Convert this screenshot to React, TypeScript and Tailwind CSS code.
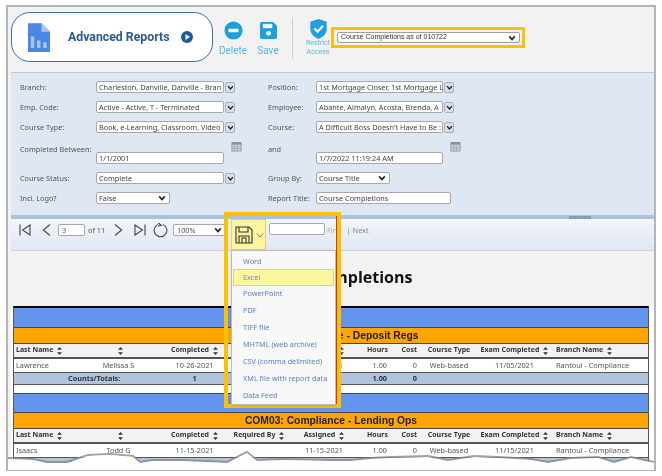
import type { ReactNode } from 'react';

const COLS = 'grid grid-cols-[71px_67px_85px_44px_86px_28px_29px_50px_81px_1fr]';

function Chevron({ className = 'w-2 h-2' }: { className?: string }) {
  return (
    <svg viewBox="0 0 10 10" className={`${className} shrink-0`} fill="none" stroke="#222" strokeWidth="2">
      <path d="M1.5 3 L5 7 L8.5 3" />
    </svg>
  );
}

function Field({ text, w, arrow, drop }: { text: string; w: string; arrow?: boolean; drop?: boolean }) {
  return (
    <div className="flex items-center gap-px">
      <div className={`${w} h-[12px] bg-white border border-[#a8a8a8] rounded-[2px] flex items-center justify-between pl-[2px] pr-[3px]`}>
        <span className="whitespace-nowrap text-[#444] text-[7.3px] leading-[10px]">{text}</span>
        {drop && <Chevron />}
      </div>
      {arrow && (
        <div className="w-[10px] h-[11px] bg-[#d9dfe8] border border-[#a8b0bc] rounded-[2px] flex items-center justify-center">
          <Chevron className="w-[7px] h-[7px]" />
        </div>
      )}
    </div>
  );
}

function Calendar() {
  return (
    <svg viewBox="0 0 12 12" className="w-[11px] h-[11px]">
      <rect x="0.5" y="1" width="11" height="10.5" rx="1" fill="#8b939c" />
      <rect x="1.5" y="4" width="9" height="6.5" fill="#d5dbe2" />
      <path d="M4 4v7M7 4v7M1.5 6.5h9M1.5 8.5h9" stroke="#8b939c" strokeWidth="0.6" />
    </svg>
  );
}

function FormRow({ className, l1, f1, l2, f2 }: { className: string; l1: string; f1: ReactNode; l2: string; f2: ReactNode }) {
  return (
    <div className={`grid grid-cols-[76px_172px_48px_1fr] items-center text-[7.3px] text-[#555] ${className}`}>
      <span className="whitespace-nowrap">{l1}</span>
      {f1}
      <span className="whitespace-nowrap">{l2}</span>
      {f2}
    </div>
  );
}

function Sort() {
  return (
    <svg viewBox="0 0 6 10" className="w-[5px] h-[8px] shrink-0 inline-block ml-[4px]" fill="#333">
      <path d="M3 0 L6 3.5 H0 Z M3 10 L0 6.5 H6 Z" />
    </svg>
  );
}

function HeadRow() {
  const cell = 'flex items-center justify-center whitespace-nowrap';
  return (
    <div className={`${COLS} h-[15px] bg-[#f2f2f2] border-b-2 border-[#555] text-[7px] font-bold text-[#333] items-center`}>
      <span className="pl-[2px] flex items-center">Last Name<Sort /></span>
      <span className={cell}><Sort /></span>
      <span className={cell}>Completed<Sort /></span>
      <span className={cell}>Required By<Sort /></span>
      <span className={cell}>Assigned<Sort /></span>
      <span className="text-right pr-[8px]">Hours</span>
      <span className="text-right pr-[7px]">Cost</span>
      <span className={cell}>Course Type</span>
      <span className={cell}>Exam Completed<Sort /></span>
      <span className="pl-[1px] flex items-center whitespace-nowrap">Branch Name<Sort /></span>
    </div>
  );
}

function DataRow({ first, last, date, assigned, exam }: { first: string; last: string; date: string; assigned: string; exam: string }) {
  return (
    <div className={`${COLS} h-[11px] mt-[1px] bg-white text-[7.3px] text-[#555] items-center whitespace-nowrap`}>
      <span className="pl-[2px]">{last}</span>
      <span className="text-center">{first}</span>
      <span className="text-center">{date}</span>
      <span />
      <span className="text-center">{assigned}</span>
      <span className="text-right pr-[8px]">1.00</span>
      <span className="text-right pr-[7px]">0</span>
      <span className="text-center">Web-based</span>
      <span className="text-center">{exam}</span>
      <span className="pl-[1px]">Rantoul - Compliance</span>
    </div>
  );
}

function TotalsRow() {
  return (
    <div className={`${COLS} h-[13px] mt-px bg-[#b0c4de] border-y border-[#555] text-[7.3px] font-bold text-[#333] items-center`}>
      <span className="col-span-2 pl-[54px] whitespace-nowrap">Counts/Totals:</span>
      <span className="text-center">1</span>
      <span />
      <span />
      <span className="text-right pr-[8px]">1.00</span>
      <span className="text-right pr-[7px]">0</span>
    </div>
  );
}

function Band({ title, h }: { title: string; h: string }) {
  return (
    <>
      <div className={`${h} bg-[#6495ed] border-b border-[#444]`} />
      <div className="h-[16px] bg-[#ffa500] border-b border-[#444] flex items-center justify-center font-['Liberation_Sans',sans-serif] font-bold text-[10.3px] text-[#222]">
        {title}
      </div>
    </>
  );
}

function TornEdge() {
  const edge =
    'M8 458 L33 459 L47 462 L67 462 L88 455 L110 454 L133 456 L140 462 L153 460 L183 460 L227 462 L247 452 L257 460 L283 459 L331 460 L351 460 L371 458 L391 457 L428 456 L448 460 L474 456 L498 457 L531 459 L548 462 L571 458 L598 457 L614 462 L631 457 L654 462';
  return (
    <svg viewBox="0 0 662 476" className="absolute inset-0 w-[662px] h-[476px] pointer-events-none">
      <path d={edge} fill="none" stroke="#8a8a8a" strokeWidth="2" opacity="0.8" />
      <path d={`${edge} L654 469 L8 469 Z`} fill="#fff" transform="translate(0 1)" />
    </svg>
  );
}

export default function App() {
  return (
    <div className="relative w-[662px] h-[476px] overflow-hidden bg-white font-['Noto_Sans',sans-serif] blur-[0.3px]">
      <div className="ml-[6px] mt-[5px] w-[650px] h-[466px] border-2 border-[#b5b5b5] bg-[#f2f2f2] overflow-hidden">
        {/* top bar */}
        <div className="h-[65px] flex items-start pl-[3px] pt-[5px]">
          <div className="w-[202px] h-[50px] bg-white border-[1.5px] border-[#3d6fa8] rounded-[19px] flex items-center pl-[15px]">
            <svg viewBox="0 0 24 30" className="w-[23px] h-[29px]">
              <path d="M1 0 H15 L24 9 V30 H1 Z" fill="#4a86e8" />
              <path d="M15 0 L24 9 H15 Z" fill="#a9c5f3" />
              <path d="M4 14h3.5v12H4zM10.5 18H14v8h-3.5zM17 20h3.5v6H17z" fill="#a9c5f3" />
            </svg>
            <span className="ml-[18px] font-['Roboto',sans-serif] font-bold text-[12.3px] text-[#2a5a8f] whitespace-nowrap">Advanced Reports</span>
            <svg viewBox="0 0 12 12" className="w-[12px] h-[12px] ml-[12px]">
              <circle cx="6" cy="6" r="6" fill="#1f5a9a" />
              <path d="M4.5 3 L9 6 L4.5 9 Z" fill="#fff" />
            </svg>
          </div>
          <div className="ml-[4px] w-[32px] flex flex-col items-center pt-[9px] font-['Roboto',sans-serif] text-[10px] text-[#5bb5e5]">
            <svg viewBox="0 0 20 20" className="w-[19px] h-[19px]">
              <circle cx="10" cy="10" r="9.5" fill="#1ea0dc" />
              <rect x="4.5" y="8.2" width="11" height="3.6" rx="1.5" fill="#fff" />
            </svg>
            <span className="mt-[3px]">Delete</span>
          </div>
          <div className="ml-[4px] w-[30px] flex flex-col items-center pt-[9px] font-['Roboto',sans-serif] text-[10px] text-[#5bb5e5]">
            <svg viewBox="0 0 18 18" className="w-[17px] h-[19px]">
              <path d="M2 0 H14 L18 4 V16 a2 2 0 0 1 -2 2 H2 a2 2 0 0 1 -2 -2 V2 a2 2 0 0 1 2 -2 Z" fill="#1ea0dc" />
              <rect x="3" y="2" width="10" height="4.5" fill="#fff" />
              <circle cx="9" cy="12" r="2.6" fill="#fff" />
            </svg>
            <span className="mt-[3px]">Save</span>
          </div>
          <div className="ml-[9px] mt-[5px] w-px h-[42px] bg-[#cfcfcf]" />
          <div className="ml-[9px] w-[32px] flex flex-col items-center pt-[7px] font-['Roboto',sans-serif] text-[7px] leading-[9px] text-[#5bb5e5] text-center">
            <svg viewBox="0 0 20 22" className="w-[19px] h-[20px]">
              <path d="M10 0 L19 3 V11 C19 16 15 20 10 22 C5 20 1 16 1 11 V3 Z" fill="#1ea0dc" />
              <path d="M5.5 10.5 L9 14 L15 7.5" fill="none" stroke="#fff" strokeWidth="2.4" />
            </svg>
            <span>Restrict</span>
            <span>Access</span>
          </div>
          <div className="-ml-[3px] mt-[15px] w-[194px] h-[21px] border-[3px] border-[#ffc000] bg-[#f2f2f2] flex items-center pl-[3px] pr-[2px]">
            <div className="flex-1 h-[11px] bg-white border border-[#a0a0a0] rounded-[2px] flex items-center justify-between pl-[3px] pr-[3px] font-['Liberation_Sans',sans-serif] text-[7px] text-[#333]">
              <span className="whitespace-nowrap">Course Completions as of 010722</span>
              <Chevron />
            </div>
          </div>
        </div>

        {/* filter panel */}
        <div className="ml-[3px] h-[143px] bg-[#dfe7f3] border-t border-[#b8cbe3] pl-[9px] pt-[8px]">
          <FormRow className="h-[12px]" l1="Branch:" f1={<Field text="Charleston, Danville, Danville - Bran" w="w-[128px]" arrow />} l2="Position:" f2={<Field text="1st Mortgage Closer, 1st Mortgage L" w="w-[127px]" arrow />} />
          <FormRow className="h-[12px] mt-[8px]" l1="Emp. Code:" f1={<Field text="Active - Active, T - Terminated" w="w-[128px]" arrow />} l2="Employee:" f2={<Field text="Abante, Almalyn, Acosta, Brenda, A" w="w-[127px]" arrow />} />
          <FormRow className="h-[12px] mt-[8px]" l1="Course Type:" f1={<Field text="Book, e-Learning, Classroom, Video" w="w-[128px]" arrow />} l2="Course:" f2={<Field text="A Difficult Boss Doesn't Have to Be :" w="w-[127px]" arrow />} />
          <div className="h-[32px] mt-[3px] grid grid-cols-[76px_172px_48px_1fr] text-[7.3px] text-[#555]">
            <span className="whitespace-nowrap mt-[8px] leading-[10px]">Completed Between:</span>
            <div className="flex items-start gap-[7px] pt-[5px]">
              <div className="mt-[11px]"><Field text="1/1/2001" w="w-[128px]" /></div>
              <Calendar />
            </div>
            <span className="mt-[8px] leading-[10px]">and</span>
            <div className="flex items-start gap-[7px] pt-[5px]">
              <div className="mt-[11px]"><Field text="1/7/2022 11:19:24 AM" w="w-[127px]" /></div>
              <Calendar />
            </div>
          </div>
          <FormRow className="h-[12px] mt-[4px]" l1="Course Status:" f1={<Field text="Complete" w="w-[128px]" arrow />} l2="Group By:" f2={<Field text="Course Title" w="w-[74px]" drop />} />
          <FormRow className="h-[12px] mt-[8px]" l1="Incl. Logo?" f1={<Field text="False" w="w-[74px]" drop />} l2="Report Title:" f2={<Field text="Course Completions" w="w-[135px]" />} />
        </div>

        {/* splitter */}
        <div className="ml-[3px] h-[4px] bg-[#a9c0de] flex justify-end pr-[63px]">
          <div className="w-[22px] h-[3px] mt-px bg-[#8a9db8]" />
        </div>

        {/* viewer toolbar */}
        <div className="ml-[3px] h-[32px] bg-gradient-to-b from-[#f3f6fa] to-[#dfe7f3] border-b border-[#cdd6e2] flex items-start pl-[8px] pt-[5px] text-[7.3px] text-[#555]">
          <svg viewBox="0 0 12 12" className="w-[12px] h-[12px]" fill="none" stroke="#444" strokeWidth="1.1">
            <path d="M1 0.5 V11.5 M11 1 L3.5 6 L11 11 Z" />
          </svg>
          <svg viewBox="0 0 8 12" className="ml-[11px] w-[9px] h-[12px]" fill="none" stroke="#444" strokeWidth="1.1">
            <path d="M7.5 0.5 L0.8 6 L7.5 11.5" />
          </svg>
          <div className="ml-[7px] w-[27px] h-[12px] bg-white border border-[#a8a8a8] rounded-[2px] pl-[3px] leading-[10px]">3</div>
          <span className="ml-[3px] w-[17px] leading-[12px] whitespace-nowrap">of 11</span>
          <svg viewBox="0 0 8 12" className="ml-[9px] w-[9px] h-[12px]" fill="none" stroke="#444" strokeWidth="1.1">
            <path d="M0.5 0.5 L7.2 6 L0.5 11.5" />
          </svg>
          <svg viewBox="0 0 12 12" className="ml-[11px] w-[12px] h-[12px]" fill="none" stroke="#444" strokeWidth="1.1">
            <path d="M11 0.5 V11.5 M1 1 L8.5 6 L1 11 Z" />
          </svg>
          <svg viewBox="0 0 16 16" className="ml-[7px] -mt-[2px] w-[15px] h-[16px]" fill="none" stroke="#444" strokeWidth="1.1">
            <path d="M5.5 2 A6.8 6.8 0 1 0 10.5 2 M5.5 0.5 L9 3 L5.5 4" />
          </svg>
          <div className="ml-[5px] w-[53px] h-[12px] bg-white border border-[#a8a8a8] rounded-[2px] flex items-center justify-between px-[3px]">
            <span>100%</span>
            <Chevron />
          </div>
          <div className="ml-[5px] -mt-[5px] w-[35px] h-[31px] bg-[#fdf6a0] border border-[#f0d060] flex items-center pl-[3px]">
            <svg viewBox="0 0 18 18" className="w-[18px] h-[18px]" fill="none" stroke="#333" strokeWidth="1.1">
              <path d="M1 1 H14 L17 4 V17 H1 Z M4 1 V6 H13 V1 M4 17 V10 H14 V17 M7 12 H11 V17 H7 Z" />
            </svg>
            <svg viewBox="0 0 10 10" className="ml-[3px] w-[8px] h-[8px]" fill="none" stroke="#555" strokeWidth="1">
              <path d="M1 3 L5 7.5 L9 3" />
            </svg>
          </div>
          <div className="ml-[3px] -mt-px w-[56px] h-[12px] bg-white border border-[#a8a8a8] rounded-[2px]" />
          <span className="ml-[2px] leading-[12px] text-[#aaa]">Find</span>
          <span className="ml-[5px] leading-[12px] text-[#888] whitespace-nowrap">| Next</span>
        </div>

        {/* report */}
        <div className="ml-[3px] h-[55px] flex items-center justify-center font-['Open_Sans',sans-serif] font-bold text-[16px] text-[#111] pb-[3px]">
          Course Completions
        </div>
        <div className="bg-white pl-[2px] pr-[5px] ml-[3px]">
          <div className="border-t-2 border-black border-x border-x-[#555]">
            <Band title="COM02: Compliance - Deposit Regs" h="h-[20px]" />
            <HeadRow />
            <DataRow last="Lawrence" first="Melissa S" date="10-26-2021" assigned="10-26-2021" exam="11/05/2021" />
            <TotalsRow />
            <div className="h-[8px] bg-white" />
            <Band title="COM03: Compliance - Lending Ops" h="h-[20px] border-t border-t-[#444]" />
            <HeadRow />
            <DataRow last="Isaacs" first="Todd G" date="11-15-2021" assigned="11-15-2021" exam="11/15/2021" />
            <TotalsRow />
          </div>
        </div>
      </div>

      <TornEdge />

      {/* callout + export menu */}
      <div className="absolute left-[224px] top-[212px] w-[117px] h-[196px] border-4 border-[#ffc000] pointer-events-none">
        <div className="absolute inset-0 border-r border-[#d0392b]" />
      </div>
      <div className="absolute left-[231px] top-[250px] w-[105px] h-[155px] bg-[#f8f8f8] border border-[#bbb] shadow-sm flex flex-col pt-[2px] text-[7.3px] text-[#5b7fcf]">
        {['Word', 'Excel', 'PowerPoint', 'PDF', 'TIFF file', 'MHTML (web archive)', 'CSV (comma delimited)', 'XML file with report data', 'Data Feed'].map((item) => (
          <div
            key={item}
            className={
              item === 'Excel'
                ? 'h-[17px] -my-px mx-px pl-[9px] flex items-center whitespace-nowrap bg-[#fdf6a0] border border-[#f0d060] text-[#7a8aa8]'
                : 'h-[17px] pl-[11px] flex items-center whitespace-nowrap'
            }
          >
            {item}
          </div>
        ))}
      </div>
    </div>
  );
}
